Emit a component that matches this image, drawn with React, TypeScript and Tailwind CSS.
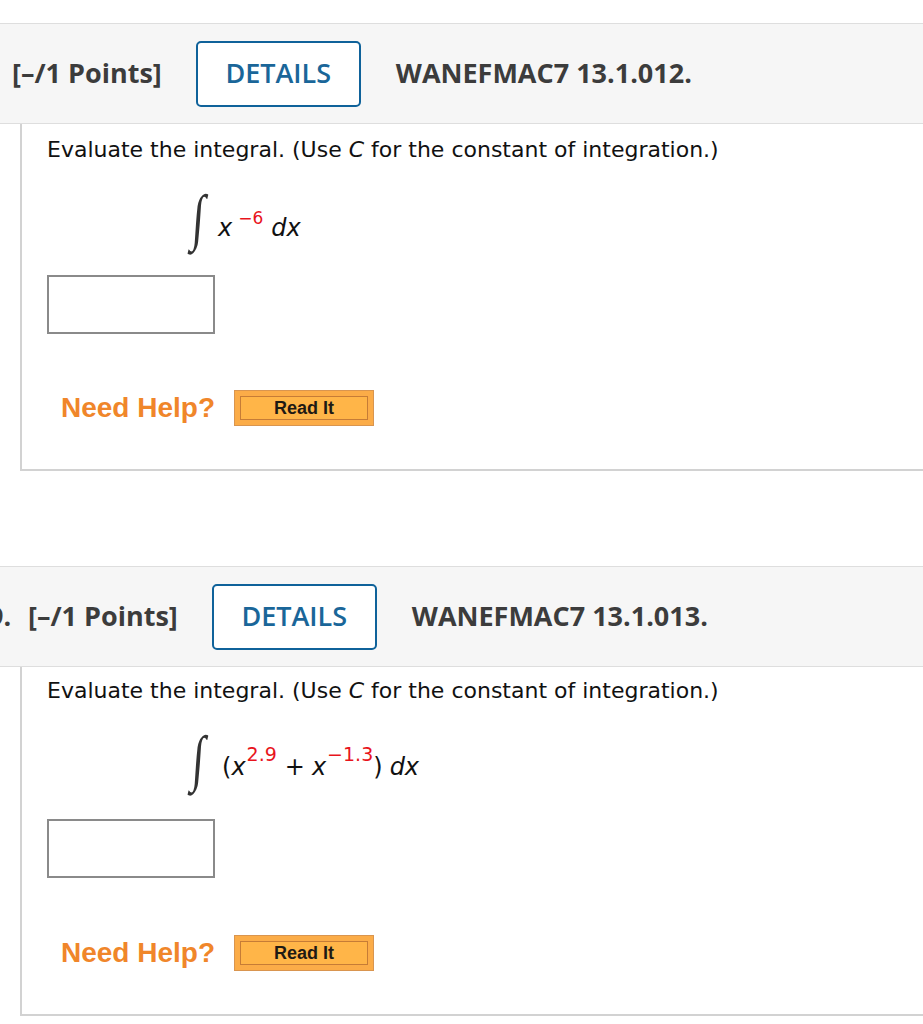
import React from "react";

const headFont = { fontFamily: '"Open Sans", "Liberation Sans", sans-serif' };
const mathFont = { fontFamily: '"DejaVu Sans", Verdana, sans-serif' };

function Integral() {
  return (
    <span
      className="relative top-[-4px] inline-block w-[27px] text-center text-[62px] leading-none text-[#333]"
      style={{ fontFamily: '"Liberation Serif", "Times New Roman", serif', transform: "scaleX(0.7) skewX(-6deg)" }}
    >
      ∫
    </span>
  );
}

function ReadIt() {
  return (
    <div className="flex h-[36px] w-[140px] items-center justify-center border border-[#d9954f] bg-[#fbac48] p-[5px]">
      <div className="flex h-full w-full items-center justify-center border border-[#c67c36] bg-[#ffb548]">
        <span className="text-[18px] font-bold leading-none text-[#1f1a14]" style={{ fontFamily: '"Liberation Sans", Arial, sans-serif' }}>
          Read It
        </span>
      </div>
    </div>
  );
}

function Question({
  num,
  code,
  children,
  bodyPt,
  mathMt,
  inputMt,
  readMt,
}: {
  num?: string;
  code: string;
  children: React.ReactNode;
  bodyPt: string;
  mathMt: string;
  inputMt: string;
  readMt: string;
}) {
  return (
    <div>
      <div
        className="flex h-[101px] items-center overflow-hidden border-y border-[#dedede] bg-[#f6f6f6] text-[#3c3c3c]"
        style={headFont}
      >
        {num ? (
          <span className="ml-[-12px] w-[40px] shrink-0 text-[27px] font-bold">{num}</span>
        ) : (
          <span className="w-[12px] shrink-0" />
        )}
        <span className="shrink-0 text-[27px] font-bold">[–/1 Points]</span>
        <div className="ml-[34px] flex h-[66px] w-[165px] shrink-0 items-center justify-center rounded-[5px] border-2 border-[#0f629a] bg-white text-[27px] font-semibold text-[#1a6699]">
          DETAILS
        </div>
        <span className="ml-[35px] shrink-0 text-[27px] font-bold">{code}</span>
      </div>
      <div
        className={`ml-[20px] flex flex-col border-b-2 border-l-2 border-[#d2d2d2] pb-[43px] pl-[25px] ${bodyPt}`}
        style={mathFont}
      >
        <p className="text-[22px] leading-[26px] text-[#111]">
          Evaluate the integral. (Use <i>C</i> for the constant of integration.)
        </p>
        <div className={`${mathMt} flex h-[70px] items-center pl-[138px] text-[#111]`}>{children}</div>
        <div className={`${inputMt} h-[59px] w-[168px] border-2 border-[#8a8a8a] bg-white`} />
        <div className={`${readMt} flex h-[36px] items-center`}>
          <span
            className="ml-[14px] text-[28px] font-bold leading-none text-[#f0862a]"
            style={{ fontFamily: '"Liberation Sans", Arial, sans-serif' }}
          >
            Need Help?
          </span>
          <div className="ml-[19px]">
            <ReadIt />
          </div>
        </div>
      </div>
    </div>
  );
}

function Sup({ children, className = "" }: { children: React.ReactNode; className?: string }) {
  return <span className={`relative text-[#e8141c] ${className}`}>{children}</span>;
}

export default function App() {
  return (
    <div className="min-h-[1024px] w-full overflow-hidden bg-white pt-[23px]">
      <Question code="WANEFMAC7 13.1.012." bodyPt="pt-[13px]" mathMt="mt-[23px]" inputMt="mt-[19px]" readMt="mt-[56px]">
        <Integral />
        <div className="ml-[6px] mt-[14px] flex items-baseline text-[24px]">
          <span className="italic">x</span>
          <Sup className="top-[-12px] ml-[6px] text-[17px]">−6</Sup>
          <span className="ml-[8px] italic">dx</span>
        </div>
      </Question>
      <div className="h-[95px]" />
      <Question num="9." code="WANEFMAC7 13.1.013." bodyPt="pt-[11px]" mathMt="mt-[23px]" inputMt="mt-[22px]" readMt="mt-[57px]">
        <Integral />
        <div className="ml-[10px] mt-[10px] flex items-baseline text-[24px]">
          <span>(</span>
          <span className="italic">x</span>
          <Sup className="top-[-14px] ml-[1px] text-[19px]">2.9</Sup>
          <span className="ml-[8px]">+</span>
          <span className="ml-[7px] italic">x</span>
          <Sup className="top-[-14px] ml-[1px] text-[19px]">−1.3</Sup>
          <span>)</span>
          <span className="ml-[7px] italic">dx</span>
        </div>
      </Question>
    </div>
  );
}
